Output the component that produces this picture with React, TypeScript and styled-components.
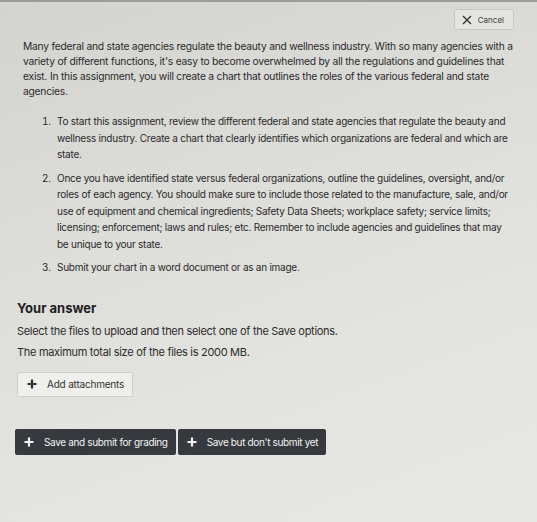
import React from 'react';
import styled, { createGlobalStyle } from 'styled-components';

const GlobalStyle = createGlobalStyle`
  html, body {
    margin: 0;
    padding: 0;
    height: 100%;
  }
  body {
    font-family: Inter, "Noto Sans", sans-serif;
    color: #2b2b2b;
  }
`;

const Page = styled.div`
  width: 537px;
  height: 522px;
  box-sizing: border-box;
  overflow: hidden;
  background: linear-gradient(160deg, #d3d3cf 0%, #dcdcd8 35%, #e4e4e0 70%, #e8e8e4 100%);
  border-top: 2px solid #9c9c98;
  padding: 7px 22px 0 23px;
`;

const TopBar = styled.div`
  display: flex;
  justify-content: flex-end;
  padding-right: 1px;
`;

const CancelButton = styled.button`
  display: flex;
  align-items: center;
  gap: 6px;
  height: 21px;
  padding: 0 9px 0 7px;
  background: #e4e4e1;
  border: 1px solid #c8c8c4;
  border-radius: 3px;
  font-family: inherit;
  font-size: 8px;
  color: #3a3a3a;
`;

const Intro = styled.p`
  margin: 9px 0 0;
  font-size: 10.25px;
  line-height: 15px;
  color: #2a2a2a;
  letter-spacing: -0.22px;
`;

const Steps = styled.ol`
  margin: 14px 0 0;
  padding-left: 30px;
  font-size: 10px;
  line-height: 16.5px;
  color: #2a2a2a;
  letter-spacing: -0.25px;
`;

const Step = styled.li`
  padding-left: 4px;
  margin-bottom: 7px;
`;

const Heading = styled.h2`
  margin: 24px 0 0 -6px;
  font-size: 13px;
  font-weight: 700;
  color: #1e1e1e;
`;

const Notes = styled.div`
  margin: 5px 0 0 -6px;
`;

const Note = styled.p`
  margin: 0;
  font-size: 11px;
  line-height: 21px;
  color: #2c2c2c;
  letter-spacing: -0.3px;
`;

const AttachButton = styled.button`
  display: flex;
  align-items: center;
  gap: 10px;
  margin: 9px 0 0 -6px;
  height: 25px;
  padding: 0 8px 0 9px;
  background: #efefec;
  border: 1px solid #cfcfcb;
  border-radius: 2px;
  font-family: inherit;
  font-size: 10px;
  letter-spacing: -0.2px;
  color: #333;
`;

const Actions = styled.div`
  display: flex;
  align-items: center;
  gap: 2px;
  margin: 32px 0 0 -8px;
`;

const ActionButton = styled.button`
  display: flex;
  align-items: center;
  gap: 10px;
  height: 26px;
  padding: 0 8px 0 9px;
  background: #363a3e;
  border: none;
  border-radius: 2px;
  font-family: inherit;
  font-size: 10px;
  color: #f2f2f2;
  letter-spacing: -0.35px;
`;

const Cross = () => (
  <svg width="10" height="10" viewBox="0 0 10 10">
    <path d="M1 1 L9 9 M9 1 L1 9" stroke="#333" strokeWidth="1.4" />
  </svg>
);

const Plus = ({ color }: { color: string }) => (
  <svg width="10" height="10" viewBox="0 0 10 10">
    <path d="M5 0.5 V9.5 M0.5 5 H9.5" stroke={color} strokeWidth="2.2" />
  </svg>
);

export default function App() {
  return (
    <Page>
      <GlobalStyle />
      <TopBar>
        <CancelButton>
          <Cross />
          Cancel
        </CancelButton>
      </TopBar>
      <Intro>
        Many federal and state agencies regulate the beauty and wellness industry. With so many agencies with a
        variety of different functions, it's easy to become overwhelmed by all the regulations and guidelines that
        exist. In this assignment, you will create a chart that outlines the roles of the various federal and state
        agencies.
      </Intro>
      <Steps>
        <Step>
          To start this assignment, review the different federal and state agencies that regulate the beauty and
          wellness industry. Create a chart that clearly identifies which organizations are federal and which are
          state.
        </Step>
        <Step>
          Once you have identified state versus federal organizations, outline the guidelines, oversight, and/or
          roles of each agency. You should make sure to include those related to the manufacture, sale, and/or
          use of equipment and chemical ingredients; Safety Data Sheets; workplace safety; service limits;
          licensing; enforcement; laws and rules; etc. Remember to include agencies and guidelines that may
          be unique to your state.
        </Step>
        <Step>Submit your chart in a word document or as an image.</Step>
      </Steps>
      <Heading>Your answer</Heading>
      <Notes>
        <Note>Select the files to upload and then select one of the Save options.</Note>
        <Note>The maximum total size of the files is 2000 MB.</Note>
      </Notes>
      <AttachButton>
        <Plus color="#333" />
        Add attachments
      </AttachButton>
      <Actions>
        <ActionButton>
          <Plus color="#f2f2f2" />
          Save and submit for grading
        </ActionButton>
        <ActionButton>
          <Plus color="#f2f2f2" />
          Save but don't submit yet
        </ActionButton>
      </Actions>
    </Page>
  );
}
